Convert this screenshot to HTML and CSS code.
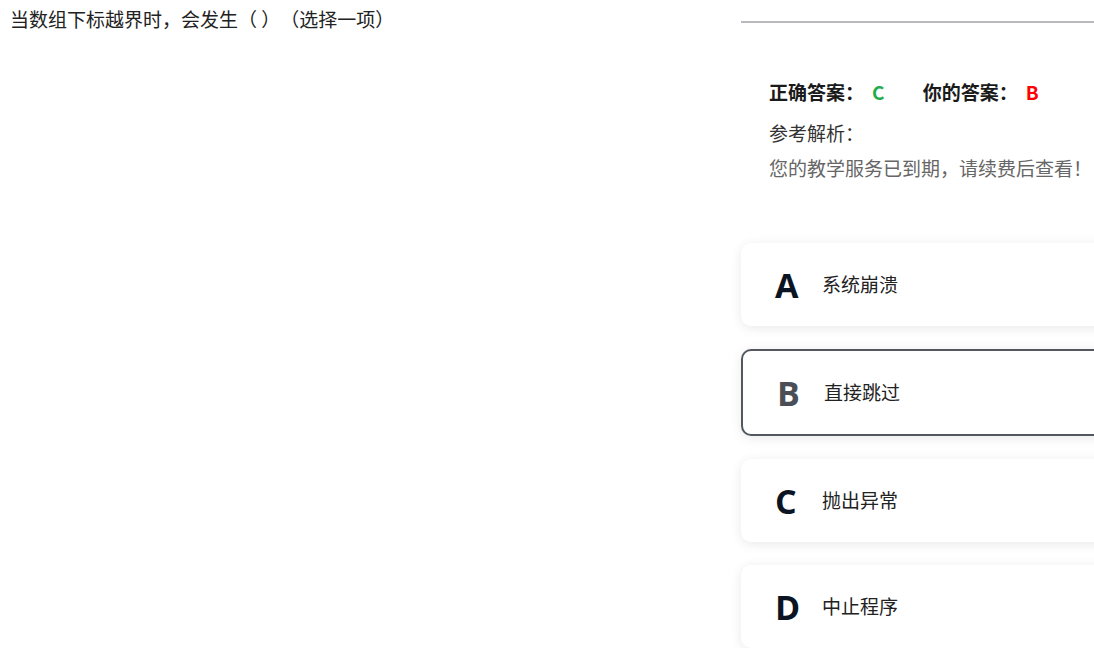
FILE: index.html
```html
<!DOCTYPE html>
<html lang="zh-CN">
<head>
  <meta charset="UTF-8" />
  <meta name="viewport" content="width=device-width, initial-scale=1.0"/>
  <title>答题解析</title>
  <link rel="stylesheet" href="styles.css">
</head>
<body>
  <div class="page">
    <!-- 左侧：题干 -->
    <div class="question">当数组下标越界时，会发生（ ）（选择一项）</div>

    <!-- 右侧：答案与选项 -->
    <div class="panel">
      <div class="answer-row">
        <span class="label">正确答案：</span><span class="right">C</span>
        <span class="label mine">你的答案：</span><span class="wrong">B</span>
      </div>
      <div class="analysis-title">参考解析：</div>
      <div class="analysis-text">您的教学服务已到期，请续费后查看！</div>

      <div class="options">
        <div class="option">
          <span class="letter">A</span>
          <span class="option-text">系统崩溃</span>
        </div>
        <div class="option selected">
          <span class="letter">B</span>
          <span class="option-text">直接跳过</span>
        </div>
        <div class="option">
          <span class="letter">C</span>
          <span class="option-text">抛出异常</span>
        </div>
        <div class="option">
          <span class="letter">D</span>
          <span class="option-text">中止程序</span>
        </div>
      </div>
    </div>
  </div>
</body>
</html>
```

FILE: styles.css
```css
* {
  box-sizing: border-box;
  margin: 0;
  padding: 0;
}
html, body {
  overflow: hidden;
}
body {
  font-family: "Noto Sans CJK SC", "Noto Sans", sans-serif;
  text-spacing-trim: space-all;
  background-color: #fff;
  color: #222;
}
.page {
  display: flex;
  align-items: flex-start;
  width: 1200px;
}
/* 题干 */
.question {
  flex: 0 0 741px;
  padding: 6px 0 0 10px;
  font-size: 19px;
  line-height: 26px;
  color: #222;
}
/* 右侧面板 */
.panel {
  flex: 0 0 420px;
  margin-top: 21px;
  border-top: 2px solid #b8babd;
}
.answer-row {
  margin-top: 56px;
  padding-left: 28px;
  font-size: 19px;
  line-height: 26px;
  font-weight: bold;
  color: #1a1a1a;
}
.answer-row .right {
  color: #1fae4b;
  margin-left: 8px;
}
.answer-row .mine {
  margin-left: 34px;
}
.answer-row .wrong {
  color: #f00;
  margin-left: 8px;
}
.analysis-title {
  margin-top: 15px;
  padding-left: 28px;
  font-size: 19px;
  line-height: 26px;
  color: #333;
}
.analysis-text {
  margin-top: 9px;
  padding-left: 28px;
  font-size: 19px;
  line-height: 26px;
  color: #666;
}
/* 选项卡片 */
.options {
  margin-top: 62px;
  display: flex;
  flex-direction: column;
  gap: 23px;
}
.option {
  display: flex;
  align-items: center;
  height: 83px;
  padding-left: 34px;
  border-radius: 10px;
  background: #fff;
  box-shadow: 0 2px 12px rgba(0, 0, 0, 0.09);
}
.option.selected {
  height: 87px;
  border: 2px solid #53585f;
}
.letter {
  width: 47px;
  font-family: "Open Sans", "Noto Sans", sans-serif;
  font-size: 34px;
  font-weight: bold;
  color: #0b1422;
}
.selected .letter {
  color: #4a4f57;
}
.option-text {
  font-size: 19px;
  color: #222;
  margin-top: -2px;
}
```
